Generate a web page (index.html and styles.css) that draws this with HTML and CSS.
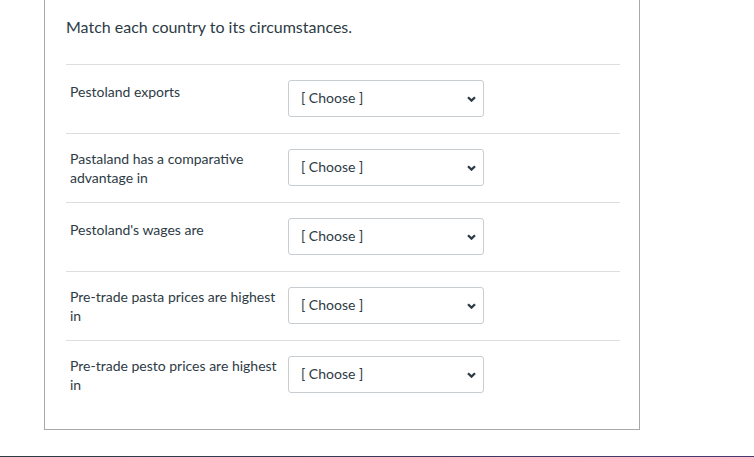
FILE: index.html
```html
<!DOCTYPE html>
<html lang="en">
<head>
<meta charset="utf-8">
<title>Matching question</title>
<link rel="stylesheet" href="styles.css">
</head>
<body>
<div class="question">
  <div class="prompt">Match each country to its circumstances.</div>
  <div class="answers">
    <div class="row">
      <div class="label label-single">Pestoland exports</div>
      <div class="select"><span>[ Choose ]</span><svg class="chev" width="9" height="6" viewBox="0 0 9 6"><path d="M1 1.2 L4.5 4.6 L8 1.2" fill="none" stroke="#2d3b45" stroke-width="2.3"/></svg></div>
    </div>
    <div class="row">
      <div class="label">Pastaland has a comparative advantage in</div>
      <div class="select"><span>[ Choose ]</span><svg class="chev" width="9" height="6" viewBox="0 0 9 6"><path d="M1 1.2 L4.5 4.6 L8 1.2" fill="none" stroke="#2d3b45" stroke-width="2.3"/></svg></div>
    </div>
    <div class="row">
      <div class="label label-single">Pestoland's wages are</div>
      <div class="select"><span>[ Choose ]</span><svg class="chev" width="9" height="6" viewBox="0 0 9 6"><path d="M1 1.2 L4.5 4.6 L8 1.2" fill="none" stroke="#2d3b45" stroke-width="2.3"/></svg></div>
    </div>
    <div class="row">
      <div class="label">Pre-trade pasta prices are highest in</div>
      <div class="select"><span>[ Choose ]</span><svg class="chev" width="9" height="6" viewBox="0 0 9 6"><path d="M1 1.2 L4.5 4.6 L8 1.2" fill="none" stroke="#2d3b45" stroke-width="2.3"/></svg></div>
    </div>
    <div class="row">
      <div class="label">Pre-trade pesto prices are highest in</div>
      <div class="select"><span>[ Choose ]</span><svg class="chev" width="9" height="6" viewBox="0 0 9 6"><path d="M1 1.2 L4.5 4.6 L8 1.2" fill="none" stroke="#2d3b45" stroke-width="2.3"/></svg></div>
    </div>
  </div>
</div>
<div class="footer-bar"></div>
</body>
</html>
```

FILE: styles.css
```css
html, body {
  margin: 0;
  padding: 0;
  background: #ffffff;
}
body {
  font-family: Lato, "Open Sans", "Liberation Sans", sans-serif;
  color: #2d3b45;
  width: 754px;
  height: 457px;
  overflow: hidden;
}
.question {
  margin-left: 44px;
  border: 1px solid #a8a8a8;
  border-top: none;
  padding: 0 19px 20px 21px;
  box-sizing: content-box;
  width: 554px;
}
.prompt {
  font-size: 16px;
  line-height: 24px;
  padding-top: 15px;
  margin-bottom: 25px;
}
.row {
  display: flex;
  align-items: flex-start;
  border-top: 1px solid #dcdfe1;
  padding: 15px 0 16px 0;
  height: 37px;
}
.label {
  flex: 0 0 214px;
  padding-left: 4px;
  font-size: 14px;
  line-height: 19px;
}
.label-single {
  padding-top: 2px;
}
.select {
  margin-left: 4px;
  width: 196px;
  height: 37px;
  box-sizing: border-box;
  border: 1px solid #c7cdd1;
  border-radius: 3px;
  display: flex;
  align-items: center;
  justify-content: space-between;
  padding: 0 7px 2px 12px;
  font-size: 14px;
  background: #fff;
}
.chev {
  display: block;
  margin-top: 3px;
}
.footer-bar {
  margin-top: 26px;
  height: 3px;
  background: linear-gradient(to right, #2d3b45, #3b3a5a 50%, #4a3873);
}
```
